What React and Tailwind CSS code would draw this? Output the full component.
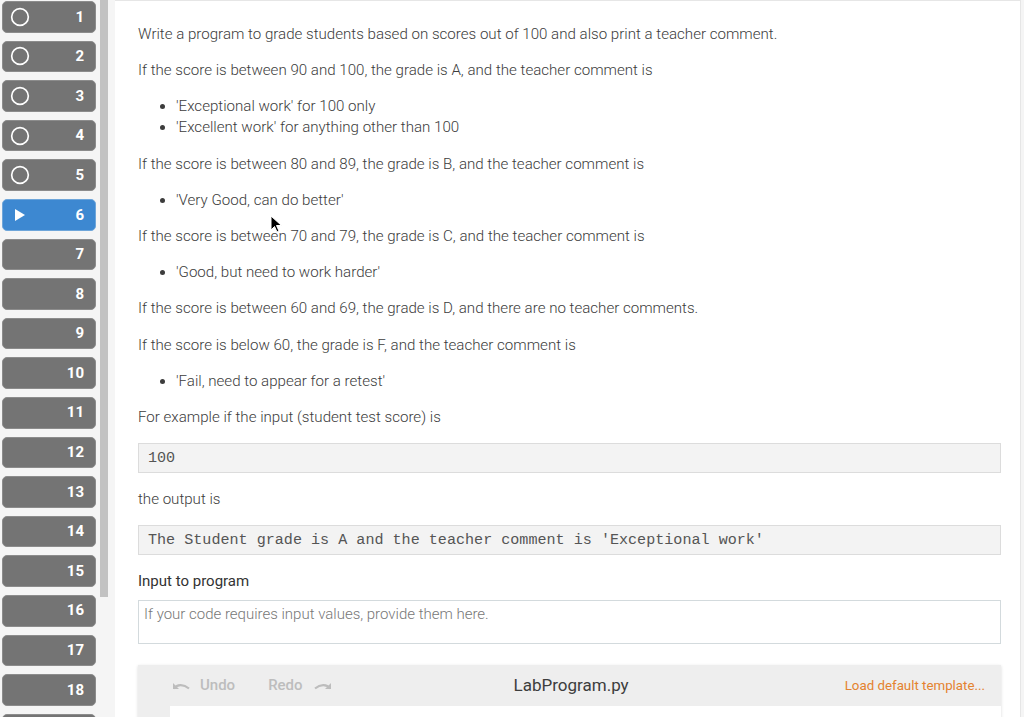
import { Circle } from 'lucide-react'

const items = Array.from({ length: 19 }, (_, i) => i + 1)

const Paragraph = ({ children }) => (
  <p className="mb-[15.2px]">{children}</p>
)

const Bullets = ({ items }) => (
  <ul className="mb-[15.2px] list-disc pl-[38px]">
    {items.map((t) => (
      <li key={t}>{t}</li>
    ))}
  </ul>
)

const CodeBox = ({ children }) => (
  <div className="mb-[16px] h-[30px] border border-[#dcdcdc] bg-[#f3f3f3] pl-[9px] font-['Liberation_Mono',monospace] text-[15.1px] leading-[28px] text-[#555]">
    {children}
  </div>
)

const UndoIcon = () => (
  <svg width="20" height="12" viewBox="0 0 20 12" fill="none">
    <path d="M2 3v6h6" fill="#bdbdbd" />
    <path d="M3 8.5C6 4.5 12 3.5 18 8.5" stroke="#bdbdbd" strokeWidth="2.2" />
  </svg>
)

const RedoIcon = () => (
  <svg width="20" height="12" viewBox="0 0 20 12" fill="none">
    <path d="M18 3v6h-6" fill="#bdbdbd" />
    <path d="M17 8.5C14 4.5 8 3.5 2 8.5" stroke="#bdbdbd" strokeWidth="2.2" />
  </svg>
)

export default function App() {
  return (
    <div className="flex h-[717px] overflow-hidden bg-[#f5f5f5] font-['Roboto',sans-serif]">
      {/* Level list */}
      <div className="flex w-[100px] shrink-0 flex-col gap-2 pl-[2px] pt-px">
        {items.map((n) => {
          const active = n === 6
          return (
            <div
              key={n}
              className={`flex h-[31.6px] w-[94px] shrink-0 items-center justify-between rounded-[5px] border pl-[7px] pr-[11px] text-[15px] font-bold text-white ${
                active ? 'border-[#6ea6da] bg-[#3d88d1]' : 'border-[#8c8c8c] bg-[#747474]'
              }`}
            >
              <span className="flex w-5 justify-center">
                {n <= 5 && <Circle size={20} strokeWidth={2} />}
                {active && (
                  <svg width="12" height="14" viewBox="0 0 12 14">
                    <path d="M1 1l10 6-10 6z" fill="white" />
                  </svg>
                )}
              </span>
              {n < 19 && <span>{n}</span>}
            </div>
          )
        })}
      </div>

      {/* Scrollbar */}
      <div className="h-[597px] w-2 shrink-0 bg-[#c2c2c2]" />

      {/* Main panel */}
      <div className="relative ml-[7px] w-[906px] shrink-0 border-r border-t border-[#e6e6e6] bg-white pl-[23px] pr-[19px] pt-[23px] text-[15.1px] font-light leading-[21px] text-[#3c3c3c]">
        <Paragraph>
          Write a program to grade students based on scores out of 100 and also print a teacher comment.
        </Paragraph>
        <Paragraph>
          If the score is between 90 and 100, the grade is A, and the teacher comment is
        </Paragraph>
        <Bullets items={["'Exceptional work' for 100 only", "'Excellent work' for anything other than 100"]} />
        <Paragraph>
          If the score is between 80 and 89, the grade is B, and the teacher comment is
        </Paragraph>
        <Bullets items={["'Very Good, can do better'"]} />
        <Paragraph>
          If the score is between 70 and 79, the grade is C, and the teacher comment is
        </Paragraph>
        <Bullets items={["'Good, but need to work harder'"]} />
        <Paragraph>
          If the score is between 60 and 69, the grade is D, and there are no teacher comments.
        </Paragraph>
        <Paragraph>If the score is below 60, the grade is F, and the teacher comment is</Paragraph>
        <Bullets items={["'Fail, need to appear for a retest'"]} />
        <Paragraph>For example if the input (student test score) is</Paragraph>
        <CodeBox>100</CodeBox>
        <Paragraph>the output is</Paragraph>
        <CodeBox>The Student grade is A and the teacher comment is 'Exceptional work'</CodeBox>

        <div className="mt-[6px] text-[15px] font-normal text-[#333]">Input to program</div>
        <div className="mt-[8px] h-[44px] border border-[#d3dadd] px-[5px] pt-[3px] text-[15px] text-[#777]">
          If your code requires input values, provide them here.
        </div>

        {/* Editor */}
        <div className="mt-[21px] shadow-[0_1px_3px_rgba(0,0,0,0.15)]">
          <div className="flex h-[41px] items-center bg-[#eeeeee] pl-[33px] pr-[16px]">
            <div className="flex items-center gap-[9px] text-[15px] font-medium text-[#bdbdbd]">
              <UndoIcon />
              <span>Undo</span>
            </div>
            <div className="ml-[33px] flex items-center gap-[10px] text-[15px] font-medium text-[#bdbdbd]">
              <span>Redo</span>
              <RedoIcon />
            </div>
            <div className="ml-[181px] text-[17px] font-normal text-[#3d3d3d]">LabProgram.py</div>
            <div className="ml-auto text-[13.3px] font-normal text-[#e4822f]">Load default template...</div>
          </div>
          <div className="flex h-10 bg-white">
            <div className="w-[32px] bg-[#eeeeee]" />
          </div>
        </div>

        {/* Mouse pointer */}
        <svg className="absolute left-[155px] top-[214px]" width="12" height="18" viewBox="0 0 12 18">
          <path d="M1 1v14l3.5-3.5 2.5 5.5 2-1-2.5-5.5h5z" fill="black" stroke="white" strokeWidth="1" />
        </svg>
      </div>
    </div>
  )
}
